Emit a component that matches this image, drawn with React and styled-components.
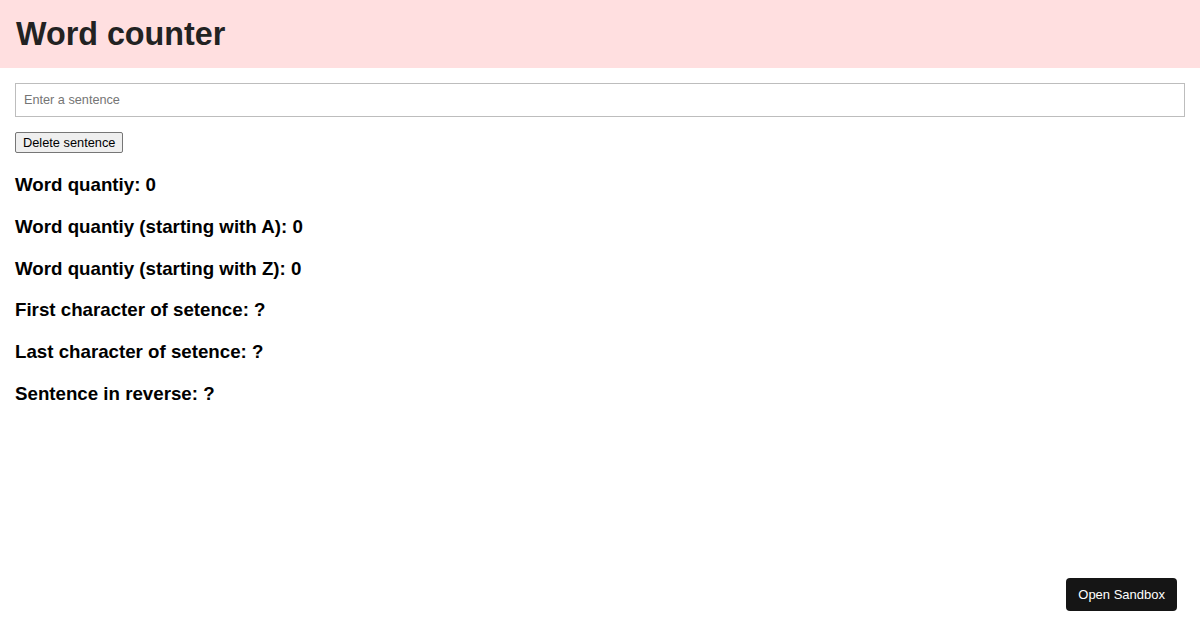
import React from "react";
import styled, { createGlobalStyle } from "styled-components";

const Global = createGlobalStyle`
  html, body { margin: 0; padding: 0; background: #fff; }
  body { font-family: "Liberation Sans", Arial, sans-serif; }
`;

const Page = styled.div`
  width: 1200px;
  height: 630px;
  position: relative;
  display: flex;
  flex-direction: column;
`;

const Header = styled.header`
  height: 68px;
  background: #ffdfe0;
  display: flex;
  align-items: center;
  padding: 0 16px;
  box-sizing: border-box;
`;

const Title = styled.h1`
  margin: 0;
  font-size: 32.3px;
  font-weight: 700;
  color: #222;
`;

const Main = styled.main`
  padding: 15px 15px 0;
  display: flex;
  flex-direction: column;
  align-items: flex-start;
`;

const Input = styled.input`
  width: 1170px;
  height: 34px;
  box-sizing: border-box;
  border: 1px solid #bdbdbd;
  padding: 0 0 1px 8px;
  font-family: "Liberation Sans", Arial, sans-serif;
  font-size: 12.7px;
  outline: none;
  &::placeholder { color: #757575; }
`;

const Button = styled.button`
  margin-top: 15px;
  height: 21px;
  padding: 0 7px 1px 7px;
  font-family: "Liberation Sans", Arial, sans-serif;
  font-size: 12.8px;
  color: #000;
  background: #efefef;
  border: 1px solid #767676;
  border-radius: 2px;
`;

const Stats = styled.div`
  margin-top: 21px;
  display: flex;
  flex-direction: column;
  gap: 20px;
`;

const Stat = styled.h3`
  margin: 0;
  height: 21.8px;
  line-height: 21.8px;
  font-size: 18.72px;
  font-weight: 700;
  color: #000;
`;

const Sandbox = styled.button`
  position: absolute;
  right: 23px;
  bottom: 19px;
  height: 33px;
  padding: 0 12px;
  background: #151515;
  color: #fff;
  border: none;
  border-radius: 4px;
  font-family: "Liberation Sans", Arial, sans-serif;
  font-size: 13px;
`;

const stats = [
  "Word quantiy: 0",
  "Word quantiy (starting with A): 0",
  "Word quantiy (starting with Z): 0",
  "First character of setence: ?",
  "Last character of setence: ?",
  "Sentence in reverse: ?",
];

export default function App() {
  return (
    <Page>
      <Global />
      <Header>
        <Title>Word counter</Title>
      </Header>
      <Main>
        <Input placeholder="Enter a sentence" />
        <Button>Delete sentence</Button>
        <Stats>
          {stats.map((s) => (
            <Stat key={s}>{s}</Stat>
          ))}
        </Stats>
      </Main>
      <Sandbox>Open Sandbox</Sandbox>
    </Page>
  );
}
